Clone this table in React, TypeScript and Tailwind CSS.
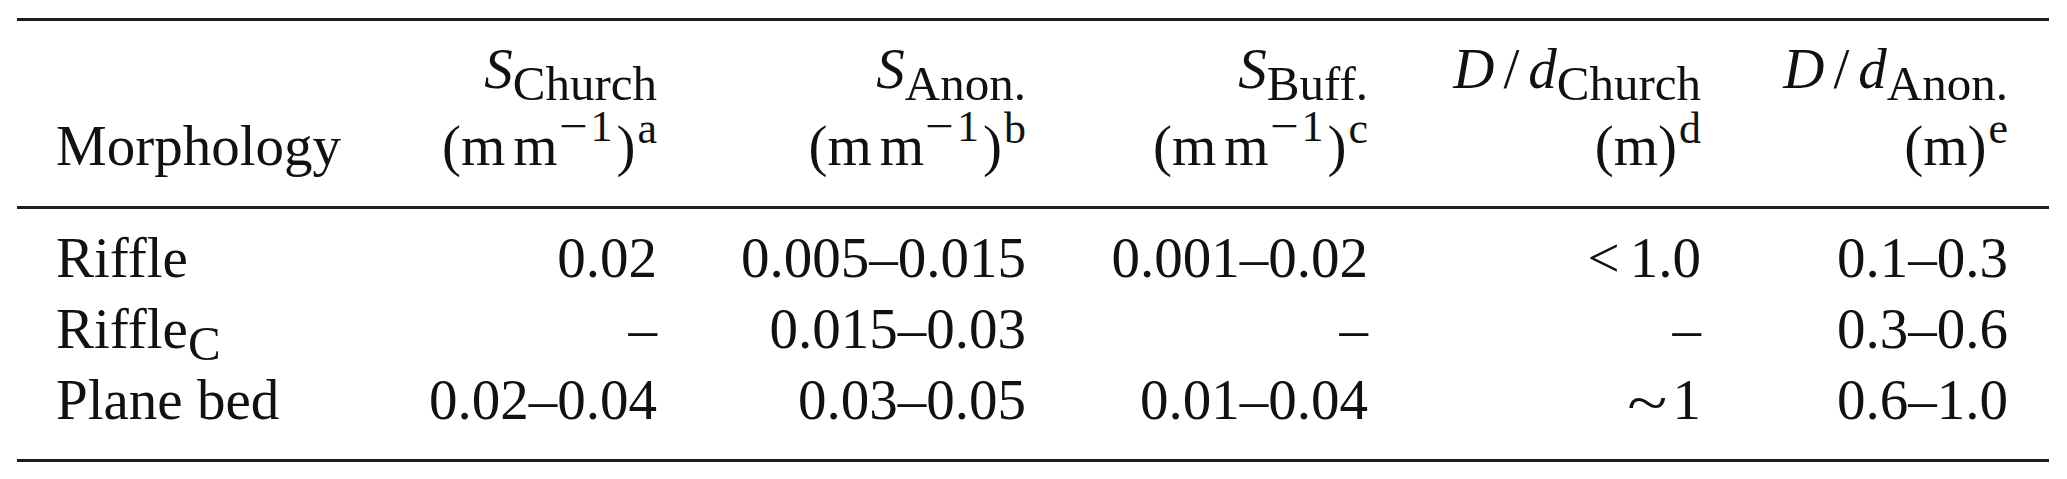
import React from "react";

const grid =
  "grid grid-cols-[300px_301px_369px_342px_333px_307px] pl-[39px] pr-[41px]";

function Sub({ children }: { children: React.ReactNode }) {
  return (
    <sub className="text-[49px] leading-none not-italic bottom-[-12px]">{children}</sub>
  );
}

function Sup({ children }: { children: React.ReactNode }) {
  return <sup className="text-[44px] leading-none top-[-22px] ml-[2px]">{children}</sup>;
}

function Unit({ sup }: { sup: string }) {
  return (
    <span>
      (m<span className="inline-block w-[8px]" />m
      <sup className="text-[44px] leading-none top-[-24px] ml-[3px]">
        <span className="inline-block scale-x-[1.15] mr-[5px]">−</span>1
      </sup>
      <span className="ml-[4px]">)</span>
      <Sup>{sup}</Sup>
    </span>
  );
}

function Ddiv({ sub }: { sub: string }) {
  return (
    <>
      <i>D</i>
      <span className="px-[9px]">/</span>
      <i>d</i>
      <Sub>{sub}</Sub>
    </>
  );
}

function HeadCell({ top, bottom }: { top?: React.ReactNode; bottom: React.ReactNode }) {
  return (
    <div className="flex flex-col items-end">
      <div className="h-[77px] leading-[77px] whitespace-nowrap">{top}</div>
      <div className="h-[77px] leading-[77px] whitespace-nowrap">{bottom}</div>
    </div>
  );
}

const rows: { name: React.ReactNode; vals: React.ReactNode[] }[] = [
  {
    name: "Riffle",
    vals: [
      "0.02",
      "0.005–0.015",
      "0.001–0.02",
      <>
        &lt;<span className="inline-block w-[10px]" />1.0
      </>,
      "0.1–0.3",
    ],
  },
  {
    name: (
      <>
        Riffle<Sub>C</Sub>
      </>
    ),
    vals: ["–", "0.015–0.03", "–", "–", "0.3–0.6"],
  },
  {
    name: "Plane bed",
    vals: [
      "0.02–0.04",
      "0.03–0.05",
      "0.01–0.04",
      <>
        <span className="inline-block scale-x-[1.3] relative top-[3px] mr-[10px]">~</span>1
      </>,
      "0.6–1.0",
    ],
  },
];

export default function App() {
  return (
    <div
      className="w-[2067px] h-[479px] bg-white pt-[18px] pl-[17px] text-[57px] text-[#111]"
      style={{ fontFamily: '"Liberation Serif", "Times New Roman", serif' }}
    >
      <div className="w-[2032px] border-t-[3px] border-b-[3px] border-[#1e1e1e]">
        <div className={`${grid} pt-[9px] pb-[22px] border-b-[3px] border-[#1e1e1e]`}>
          <div className="flex flex-col">
            <div className="h-[77px]" />
            <div className="h-[77px] leading-[77px]">Morphology</div>
          </div>
          <HeadCell
            top={
              <>
                <i>S</i>
                <Sub>Church</Sub>
              </>
            }
            bottom={<Unit sup="a" />}
          />
          <HeadCell
            top={
              <>
                <i>S</i>
                <Sub>Anon.</Sub>
              </>
            }
            bottom={<Unit sup="b" />}
          />
          <HeadCell
            top={
              <>
                <i>S</i>
                <Sub>Buff.</Sub>
              </>
            }
            bottom={<Unit sup="c" />}
          />
          <HeadCell
            top={<Ddiv sub="Church" />}
            bottom={
              <>
                (m)<Sup>d</Sup>
              </>
            }
          />
          <HeadCell
            top={<Ddiv sub="Anon." />}
            bottom={
              <>
                (m)<Sup>e</Sup>
              </>
            }
          />
        </div>
        <div className={`${grid} pt-[13px] pb-[24px]`}>
          {rows.map((r, i) => (
            <React.Fragment key={i}>
              <div className="h-[71px] leading-[71px] whitespace-nowrap">{r.name}</div>
              {r.vals.map((v, j) => (
                <div key={j} className="h-[71px] leading-[71px] text-right whitespace-nowrap">
                  {v}
                </div>
              ))}
            </React.Fragment>
          ))}
        </div>
      </div>
    </div>
  );
}
